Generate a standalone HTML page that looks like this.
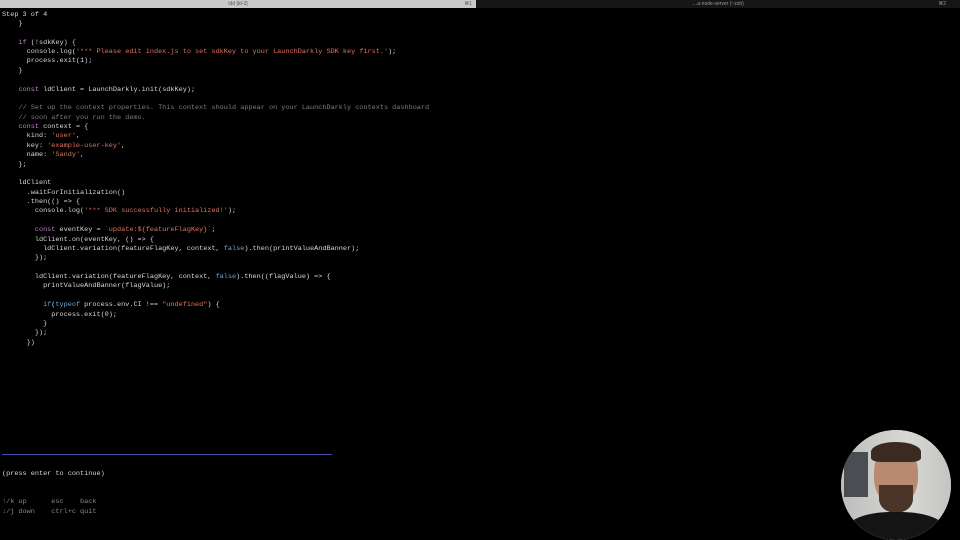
<!DOCTYPE html>
<html><head><meta charset="utf-8"><style>
*{margin:0;padding:0;box-sizing:border-box}
html,body{width:960px;height:540px;background:#000;overflow:hidden;position:relative}
.bar{position:absolute;top:0;height:8px;font:5px "Liberation Sans",sans-serif;text-align:center;line-height:8px}
.l{left:0;width:476px;background:#c9c9c9;color:#555}
.r{left:476px;width:484px;background:#161616;color:#999}
pre{position:absolute;left:2px;top:10.5px;font-family:"Liberation Mono",monospace;font-size:6.85px;line-height:9.38px;color:#d8d8d8;white-space:pre}
.k{color:#c77dcf}.s{color:#e2735f}.c{color:#7d7d7d}.n{color:#6aa8d8}.g{color:#8a8a8a}
.hr{position:absolute;left:2px;top:454px;width:330px;height:1px;background:#4b4ba8}
.cam{position:absolute;left:841px;top:430px;width:110px;height:110px;border-radius:50%;overflow:hidden;background:#cfcfcd}
.cam div{position:absolute}
</style></head><body>
<div class="bar l">ldd [ld-3]<span style="position:absolute;right:4px">⌘1</span></div>
<div class="bar r">…a-node-server (~zsh)<span style="position:absolute;right:14px">⌘2</span></div>
<pre>Step 3 of 4
    }

    <span class="k">if</span> (!sdkKey) {
      console.log(<span class="s">'*** Please edit index.js to set sdkKey to your LaunchDarkly SDK key first.'</span>);
      process.exit(1);
    }

    <span class="k">const</span> ldClient = LaunchDarkly.init(sdkKey);

    <span class="c">// Set up the context properties. This context should appear on your LaunchDarkly contexts dashboard</span>
    <span class="c">// soon after you run the demo.</span>
    <span class="k">const</span> context = {
      kind: <span class="s">'user'</span>,
      key: <span class="s">'example-user-key'</span>,
      name: <span class="s">'Sandy'</span>,
    };

    ldClient
      .waitForInitialization()
      .then(() =&gt; {
        console.log(<span class="s">'*** SDK successfully initialized!'</span>);

        <span class="k">const</span> eventKey = <span class="s">`update:${featureFlagKey}`</span>;
        ldClient.on(eventKey, () =&gt; {
          ldClient.variation(featureFlagKey, context, <span class="n">false</span>).then(printValueAndBanner);
        });

        ldClient.variation(featureFlagKey, context, <span class="n">false</span>).then((flagValue) =&gt; {
          printValueAndBanner(flagValue);

          <span class="n">if</span>(<span class="n">typeof</span> process.env.CI !== <span class="s">"undefined"</span>) {
            process.exit(0);
          }
        });
      })</pre>
<div class="hr"></div>
<pre style="top:470px">(press enter to continue)</pre>
<pre style="top:498px;line-height:9.6px" class="g">↑/k up      esc    back
↓/j down    ctrl+c quit</pre>
<div class="cam">
<div style="left:0;top:0;width:110px;height:110px;background:linear-gradient(90deg,#bdbdbb,#d8d8d6 60%,#c4c4c2)"></div>
<div style="left:3px;top:22px;width:24px;height:45px;background:#4a4e52"></div>
<div style="left:33px;top:15px;width:44px;height:60px;border-radius:45%;background:#b88a70"></div>
<div style="left:30px;top:12px;width:50px;height:20px;border-radius:50% 50% 20% 20%;background:#3a2a22"></div>
<div style="left:38px;top:55px;width:34px;height:28px;border-radius:0 0 50% 50%;background:#4a3528"></div>
<div style="left:5px;top:82px;width:100px;height:40px;border-radius:45% 45% 0 0;background:#141414"></div>
</div>
</body></html>
